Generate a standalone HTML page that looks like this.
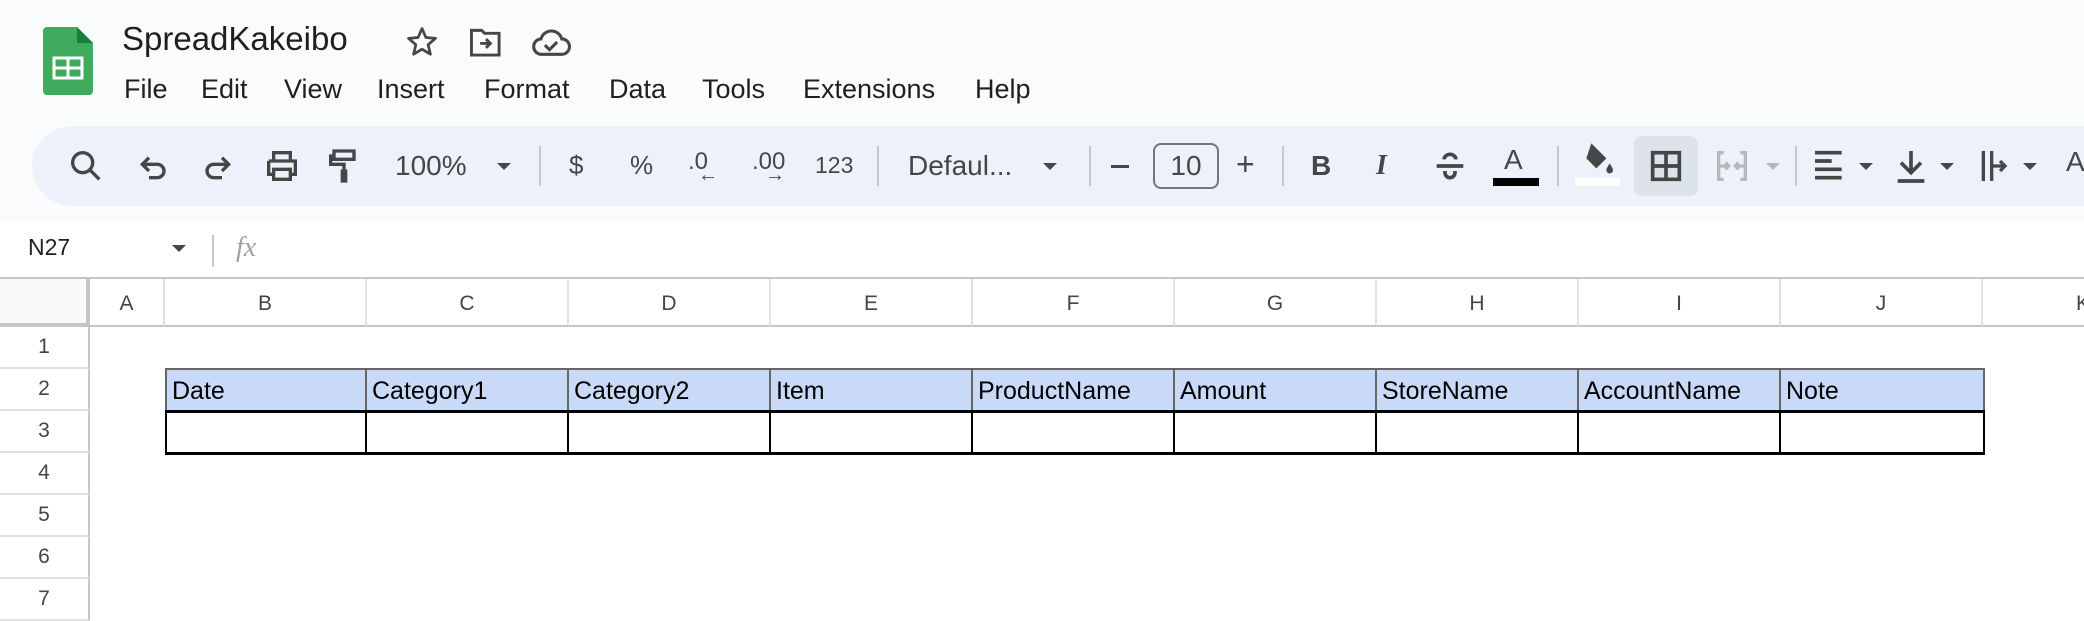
<!DOCTYPE html>
<html><head><meta charset="utf-8"><style>
*{margin:0;padding:0;box-sizing:border-box}
body{width:2084px;height:612px;overflow:hidden;background:#fff;font-family:"Liberation Sans",Arial,sans-serif;position:relative}
.a{position:absolute}
.top{left:0;top:0;width:2084px;height:221px;background:#f9fbfd}
.menu{top:74px;font-size:27px;color:#1f1f1f}
.tb{left:32px;top:126px;width:2100px;height:80px;background:#edf2fa;border-radius:40px}
.ic{top:146px;width:40px;height:40px}
.t{color:#444746;font-size:28px}
.sep{top:146px;width:2px;height:40px;background:#c7c7c7}
.drop{width:0;height:0;border-left:7px solid transparent;border-right:7px solid transparent;border-top:7px solid #444746}
.col{top:279px;height:48px;border-right:2px solid #e1e1e1;text-align:center;font-size:21px;color:#444;line-height:50px;border-bottom:2px solid #c4c7c5}
.row{left:0;width:90px;height:42px;border-bottom:2px solid #e1e1e1;border-right:2px solid #c4c7c5;text-align:center;font-size:21px;color:#444;line-height:40px}
.h{top:369px;height:42px;background:#c9daf8;border-right:2px solid #666;font-size:25px;color:#000;padding-left:5px;line-height:44px}
.c{top:411px;height:42px;border-right:2px solid #000}
</style></head><body>
<div class="a top"></div>
<svg class="a" style="left:43px;top:27px" width="50" height="68" viewBox="0 0 50 68"><path d="M4 0H34L50 16V64a4 4 0 0 1-4 4H4a4 4 0 0 1-4-4V4a4 4 0 0 1 4-4z" fill="#34a853" opacity=".95"/><path d="M34 0V16H50z" fill="#188038"/><path d="M11 31h28v20H11z" fill="none" stroke="#fff" stroke-width="3"/><path d="M11 41h28M25 31v20" stroke="#fff" stroke-width="3"/></svg>
<div class="a" style="left:122px;top:20px;font-size:33px;color:#1f1f1f">SpreadKakeibo</div>
<svg class="a" style="left:404px;top:24px" width="36" height="36" viewBox="0 0 24 24"><path d="M12 3l2.6 6 6.4.6-4.9 4.2 1.5 6.3L12 16.8 6.4 20.1l1.5-6.3L3 9.6l6.4-.6z" fill="none" stroke="#444746" stroke-width="1.8" stroke-linejoin="round"/></svg>
<svg class="a" style="left:468px;top:26px" width="36" height="32" viewBox="0 0 24 22"><path d="M2 3h7l2 2h10v15H2z" fill="none" stroke="#444746" stroke-width="2"/><path d="M8 12h7m-3-3l3 3-3 3" fill="none" stroke="#444746" stroke-width="2"/></svg>
<svg class="a" style="left:531px;top:26px" width="40" height="32" viewBox="0 0 26 20"><path d="M7 18a5 5 0 0 1-.5-10A7 7 0 0 1 20 8a5 5 0 0 1 0 10z" fill="none" stroke="#444746" stroke-width="2"/><path d="M9 12l3 3 5-5" fill="none" stroke="#444746" stroke-width="2"/></svg>
<div class="a menu" style="left:124px">File</div>
<div class="a menu" style="left:201px">Edit</div>
<div class="a menu" style="left:284px">View</div>
<div class="a menu" style="left:377px">Insert</div>
<div class="a menu" style="left:484px">Format</div>
<div class="a menu" style="left:609px">Data</div>
<div class="a menu" style="left:702px">Tools</div>
<div class="a menu" style="left:803px">Extensions</div>
<div class="a menu" style="left:975px">Help</div>
<div class="a tb"></div>
<svg class="a ic" style="left:66px" viewBox="0 0 24 24"><circle cx="10" cy="10" r="6" fill="none" stroke="#444746" stroke-width="2"/><path d="M14.5 14.5L20 20" stroke="#444746" stroke-width="2"/></svg>
<svg class="a ic" style="left:134px" viewBox="0 0 24 24"><path d="M9 7L5 11l4 4M5 11h9a4 4 0 0 1 0 8H9" fill="none" stroke="#444746" stroke-width="2"/></svg>
<svg class="a ic" style="left:197px" viewBox="0 0 24 24"><path d="M15 7l4 4-4 4M19 11h-9a4 4 0 0 0 0 8h5" fill="none" stroke="#444746" stroke-width="2"/></svg>
<svg class="a ic" style="left:262px" viewBox="0 0 24 24"><path d="M7 8V4h10v4M4 9h16v8h-3M7 17H4V9" fill="none" stroke="#444746" stroke-width="2"/><path d="M7 14h10v6H7z" fill="none" stroke="#444746" stroke-width="2"/></svg>
<svg class="a ic" style="left:324px" viewBox="0 0 24 24"><path d="M6 3h12v5H6zM6 6H4v5h8v4M11 15h2v6h-2z" fill="none" stroke="#444746" stroke-width="2"/></svg>
<div class="a t" style="left:395px;top:150px">100%</div>
<div class="a drop" style="left:497px;top:163px"></div>
<div class="a sep" style="left:539px"></div>
<div class="a t" style="left:569px;top:150px;font-size:26px">$</div>
<div class="a t" style="left:630px;top:150px;font-size:26px">%</div>
<div class="a t" style="left:688px;top:148px;font-size:24px">.0</div>
<div class="a t" style="left:698px;top:164px;font-size:20px">←</div>
<div class="a t" style="left:752px;top:148px;font-size:24px">.00</div>
<div class="a t" style="left:765px;top:164px;font-size:20px">→</div>
<div class="a t" style="left:815px;top:152px;font-size:23px">123</div>
<div class="a sep" style="left:877px"></div>
<div class="a t" style="left:908px;top:150px">Defaul...</div>
<div class="a drop" style="left:1043px;top:163px"></div>
<div class="a sep" style="left:1089px"></div>
<div class="a" style="left:1111px;top:165px;width:18px;height:3px;background:#444746"></div>
<div class="a" style="left:1153px;top:143px;width:66px;height:46px;border:2px solid #747775;border-radius:8px;text-align:center;font-size:28px;line-height:42px;color:#444746">10</div>
<div class="a t" style="left:1236px;top:146px;font-size:32px">+</div>
<div class="a sep" style="left:1282px"></div>
<div class="a t" style="left:1311px;top:150px;font-weight:bold">B</div>
<div class="a t" style="left:1376px;top:150px;font-style:italic;font-weight:bold;font-family:'Liberation Serif',serif">I</div>
<svg class="a ic" style="left:1430px" viewBox="0 0 24 24"><path d="M8.5 8a3.5 3 0 0 1 7 0M4 12h16M9 15v1a3 3 0 0 0 6 0v-1" fill="none" stroke="#444746" stroke-width="2.2"/></svg>
<div class="a t" style="left:1504px;top:144px">A</div>
<div class="a" style="left:1493px;top:178px;width:46px;height:8px;background:#000"></div>
<div class="a sep" style="left:1557px"></div>
<svg class="a ic" style="left:1578px;top:140px" viewBox="0 0 24 24"><path d="M8 2l9 9-6 6-6-6z" fill="#444746"/><path d="M19 14s-2 3-2 4a2 2 0 0 0 4 0c0-1-2-4-2-4z" fill="#444746"/></svg>
<div class="a" style="left:1575px;top:178px;width:45px;height:8px;background:#fff"></div>
<div class="a" style="left:1634px;top:136px;width:64px;height:60px;background:#dde3ea;border-radius:8px"></div>
<svg class="a ic" style="left:1646px" viewBox="0 0 24 24"><path d="M4 4h16v16H4zM4 12h16M12 4v16" fill="none" stroke="#444746" stroke-width="2.2"/></svg>
<svg class="a ic" style="left:1712px" viewBox="0 0 24 24"><path d="M7 4H4v16h3M17 4h3v16h-3M4 12h6m-2-2l2 2-2 2M20 12h-6m2-2l-2 2 2 2" fill="none" stroke="#b6b9bc" stroke-width="2"/></svg>
<div class="a drop" style="left:1766px;top:163px;border-top-color:#b6b9bc"></div>
<div class="a sep" style="left:1795px"></div>
<svg class="a ic" style="left:1810px" viewBox="0 0 24 24"><path d="M3 4h16M3 9h10M3 14h16M3 19h16" stroke="#444746" stroke-width="2.2"/></svg>
<div class="a drop" style="left:1859px;top:163px"></div>
<svg class="a ic" style="left:1891px" viewBox="0 0 24 24"><path d="M12 3v13M6 10l6 6 6-6M4 21h16" fill="none" stroke="#444746" stroke-width="2.2"/></svg>
<div class="a drop" style="left:1940px;top:163px"></div>
<svg class="a ic" style="left:1975px" viewBox="0 0 24 24"><path d="M5 3v18M10 3v18M10 12h8m-3-3l3 3-3 3" fill="none" stroke="#444746" stroke-width="2"/></svg>
<div class="a drop" style="left:2023px;top:163px"></div>
<div class="a t" style="left:2066px;top:146px">A</div>
<div class="a" style="left:28px;top:234px;font-size:23px;color:#1f1f1f">N27</div>
<div class="a drop" style="left:172px;top:245px"></div>
<div class="a" style="left:212px;top:235px;width:2px;height:32px;background:#c7c7c7"></div>
<div class="a" style="left:236px;top:232px;font-size:28px;font-style:italic;color:#a0a0a0;font-family:'Liberation Serif',serif">fx</div>
<div class="a" style="left:0;top:277px;width:2084px;height:2px;background:#c4c7c5"></div>
<div class="a" style="left:0;top:279px;width:90px;height:48px;background:#f8f9fa;border-right:4px solid #c4c7c5;border-bottom:4px solid #c4c7c5"></div>
<div class="a col" style="left:90px;width:75px">A</div>
<div class="a col" style="left:165px;width:202px">B</div>
<div class="a col" style="left:367px;width:202px">C</div>
<div class="a col" style="left:569px;width:202px">D</div>
<div class="a col" style="left:771px;width:202px">E</div>
<div class="a col" style="left:973px;width:202px">F</div>
<div class="a col" style="left:1175px;width:202px">G</div>
<div class="a col" style="left:1377px;width:202px">H</div>
<div class="a col" style="left:1579px;width:202px">I</div>
<div class="a col" style="left:1781px;width:202px">J</div>
<div class="a col" style="left:1983px;width:202px">K</div>
<div class="a row" style="top:327px">1</div>
<div class="a row" style="top:369px">2</div>
<div class="a row" style="top:411px">3</div>
<div class="a row" style="top:453px">4</div>
<div class="a row" style="top:495px">5</div>
<div class="a row" style="top:537px">6</div>
<div class="a row" style="top:579px">7</div>
<div class="a h" style="left:165px;width:202px;border-left:2px solid #666">Date</div>
<div class="a h" style="left:367px;width:202px">Category1</div>
<div class="a h" style="left:569px;width:202px">Category2</div>
<div class="a h" style="left:771px;width:202px">Item</div>
<div class="a h" style="left:973px;width:202px">ProductName</div>
<div class="a h" style="left:1175px;width:202px">Amount</div>
<div class="a h" style="left:1377px;width:202px">StoreName</div>
<div class="a h" style="left:1579px;width:202px">AccountName</div>
<div class="a h" style="left:1781px;width:204px">Note</div>
<div class="a" style="left:165px;top:368px;width:1820px;height:2px;background:#666"></div>
<div class="a c" style="left:165px;width:202px;border-left:2px solid #000"></div>
<div class="a c" style="left:367px;width:202px"></div>
<div class="a c" style="left:569px;width:202px"></div>
<div class="a c" style="left:771px;width:202px"></div>
<div class="a c" style="left:973px;width:202px"></div>
<div class="a c" style="left:1175px;width:202px"></div>
<div class="a c" style="left:1377px;width:202px"></div>
<div class="a c" style="left:1579px;width:202px"></div>
<div class="a c" style="left:1781px;width:204px"></div>
<div class="a" style="left:165px;top:410px;width:1820px;height:3px;background:#000"></div>
<div class="a" style="left:165px;top:452px;width:1820px;height:3px;background:#000"></div>
</body></html>
